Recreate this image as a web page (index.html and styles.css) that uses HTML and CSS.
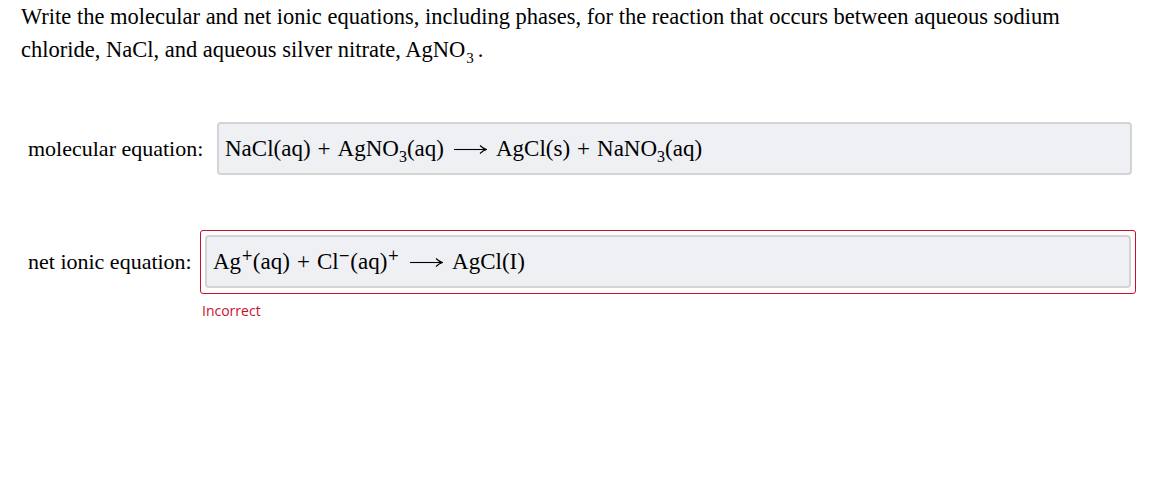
FILE: index.html
```html
<!DOCTYPE html>
<html>
<head>
<meta charset="utf-8">
<link rel="stylesheet" href="styles.css">
</head>
<body>
<div class="page">
  <p class="question">Write the molecular and net ionic equations, including phases, for the reaction that occurs between aqueous sodium chloride, NaCl, and aqueous silver nitrate, AgNO<sub>3</sub>.</p>

  <div class="row row-mol">
    <div class="label label-mol">molecular equation:</div>
    <div class="field field-mol">NaCl(aq)<span class="op">+</span>AgNO<sub>3</sub>(aq)<svg class="arrow" width="33" height="12" viewBox="0 0 33 12"><path d="M0 6.5H31" stroke="#000" stroke-width="1.1"/><path d="M26 2.5Q29 5.5 32.5 6.5Q29 7.5 26 10.5" fill="none" stroke="#000" stroke-width="1.1"/></svg>AgCl(s)<span class="op">+</span>NaNO<sub>3</sub>(aq)</div>
  </div>

  <div class="row row-net">
    <div class="label label-net">net ionic equation:</div>
    <div class="wrong">
      <div class="field">Ag<sup>+</sup>(aq)<span class="op">+</span>Cl<sup>−</sup>(aq)<sup>+</sup><svg class="arrow arrow-net" width="33" height="12" viewBox="0 0 33 12"><path d="M0 6.5H31" stroke="#000" stroke-width="1.1"/><path d="M26 2.5Q29 5.5 32.5 6.5Q29 7.5 26 10.5" fill="none" stroke="#000" stroke-width="1.1"/></svg>AgCl(I)</div>
    </div>
  </div>
  <div class="feedback">Incorrect</div>
</div>
</body>
</html>
```

FILE: styles.css
```css
html, body {
  margin: 0;
  padding: 0;
  background: #ffffff;
}

.page {
  font-family: "Liberation Serif", "Times New Roman", serif;
  color: #000;
}

.question {
  margin: 0;
  padding: 0 0 0 21px;
  font-size: 22.5px;
  line-height: 33px;
  width: 1080px;
}

.question sub {
  font-size: 15px;
  line-height: 0;
  vertical-align: -6px;
  margin: 0 4px 0 1px;
}

.row {
  display: flex;
  align-items: center;
}

.row-mol {
  margin-top: 56px;
  margin-right: 17px;
}

.row-net {
  margin-top: 55px;
  margin-right: 13px;
}

.label {
  font-size: 22px;
  padding-left: 28px;
  box-sizing: border-box;
  flex: none;
}

.label-mol {
  width: 217px;
}

.label-net {
  width: 200px;
}

.field {
  flex: 1;
  height: 53px;
  box-sizing: border-box;
  border: 2px solid #d4d4d4;
  border-radius: 4px;
  background: #eff0f4;
  font-size: 23px;
  line-height: 49px;
  padding-left: 6px;
  white-space: nowrap;
}

.field sub {
  font-size: 16px;
  line-height: 0;
  vertical-align: -6px;
}

.field sup {
  font-family: "DejaVu Serif", serif;
  font-size: 14px;
  line-height: 0;
  vertical-align: 9px;
}

.op {
  margin: 0 7px;
}

.arrow {
  vertical-align: 1px;
  margin: 0 9px 0 10px;
}

.arrow-net {
  margin-left: 11px;
}

.wrong {
  flex: 1;
  border: 1px solid #c8102e;
  border-radius: 3px;
  padding: 4px 4px 5px 4px;
}

.feedback {
  font-family: "Open Sans", "Noto Sans", sans-serif;
  font-size: 14px;
  color: #c8102e;
  margin-top: 7px;
  padding-left: 202px;
}
```
